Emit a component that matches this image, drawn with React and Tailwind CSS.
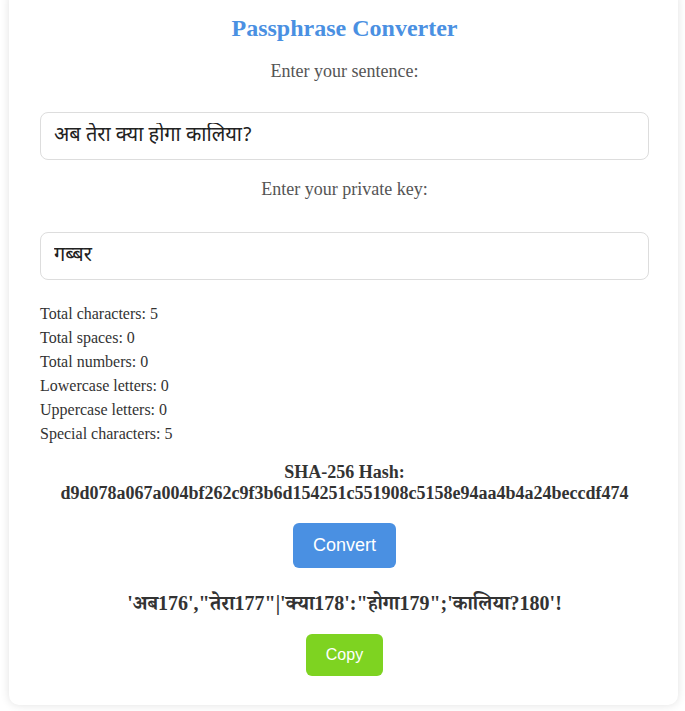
import React, { useState } from 'react';

const serif = { fontFamily: '"Liberation Serif", "Noto Serif Devanagari", "Noto Sans Devanagari", serif' };

const App = () => {
  const [sentence, setSentence] = useState('अब तेरा क्या होगा कालिया?');
  const [key, setKey] = useState('गब्बर');

  const stats = [
    ['Total characters', 5],
    ['Total spaces', 0],
    ['Total numbers', 0],
    ['Lowercase letters', 0],
    ['Uppercase letters', 0],
    ['Special characters', 5],
  ];

  return (
    <div className="min-h-[711px] bg-white overflow-hidden font-['Liberation_Serif',serif]">
      <div className="ml-[9px] w-[669px] -mt-[10px] pt-[24px] pb-[29px] pl-[31px] pr-[29px] bg-white rounded-[10px] shadow-[0_0_10px_rgba(0,0,0,0.12)]">
        {/* Title */}
        <h1 className="text-center text-[24px] leading-[28px] font-bold text-[#4a90e2]">Passphrase Converter</h1>

        {/* Sentence */}
        <label className="block mt-[19px] text-center text-[18px] leading-[21px] text-[#555]">Enter your sentence:</label>
        <input
          value={sentence}
          onChange={(e) => setSentence(e.target.value)}
          className="block w-full mt-[30px] h-[48px] px-[13px] border border-[#ddd] rounded-[8px] text-[20px] text-[#222] outline-none font-['Noto_Sans_Devanagari','Noto_Sans',sans-serif]"
        />

        {/* Private key */}
        <label className="block mt-[19px] text-center text-[18px] leading-[21px] text-[#555]">Enter your private key:</label>
        <input
          value={key}
          onChange={(e) => setKey(e.target.value)}
          className="block w-full mt-[32px] h-[48px] px-[13px] border border-[#ddd] rounded-[8px] text-[20px] text-[#222] outline-none font-['Noto_Sans_Devanagari','Noto_Sans',sans-serif]"
        />

        {/* Stats */}
        <div className="mt-[22px] text-[16px] leading-[24px] text-[#333]">
          {stats.map(([label, n]) => (
            <p key={label}>{label}: {n}</p>
          ))}
        </div>

        {/* Hash */}
        <div className="mt-[16px] text-center text-[18px] leading-[21px] font-bold text-[#333]">
          <p>SHA-256 Hash:</p>
          <p>d9d078a067a004bf262c9f3b6d154251c551908c5158e94aa4b4a24beccdf474</p>
        </div>

        <div className="flex justify-center mt-[19px]">
          <button className="h-[45px] px-[20px] rounded-[6px] bg-[#4a90e2] text-white text-[18px] font-['Liberation_Sans',Arial,sans-serif]">
            Convert
          </button>
        </div>

        {/* Result */}
        <p className="mt-[23px] text-center text-[20px] leading-[24px] font-bold text-[#333]" style={serif}>
          'अब176',"तेरा177"|'क्या178':"होगा179";'कालिया?180'!
        </p>

        <div className="flex justify-center mt-[19px]">
          <button className="h-[42px] px-[20px] rounded-[6px] bg-[#7ed321] text-white text-[16px] font-['Liberation_Sans',Arial,sans-serif]">
            Copy
          </button>
        </div>
      </div>
    </div>
  );
};

export default App;
